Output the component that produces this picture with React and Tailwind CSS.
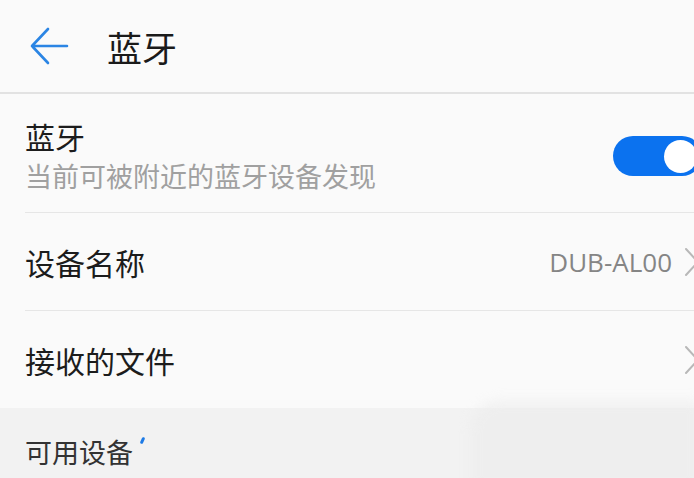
const font = { fontFamily: '"Noto Sans CJK SC", "Noto Sans", sans-serif' }

const Toggle = () => (
	<div className="w-[89px] h-[40px] mt-[6px] rounded-full bg-[#0b72ef] flex items-center justify-end pr-[5px] shrink-0">
		<div className="w-[33px] h-[33px] rounded-full bg-white" />
	</div>
)

const Chevron = () => (
	<svg width="16" height="30" viewBox="0 0 16 30" fill="none">
		<path d="M2 2l12 13L2 28" stroke="#b8b8b8" strokeWidth="2" strokeLinecap="round" strokeLinejoin="round" />
	</svg>
)

const Row = ({ label, children }) => (
	<div className="h-[98px] pl-[25px] flex items-center">
		<div className="flex-1 h-full flex items-center justify-between border-t border-[#e6e6e6] pr-[20px]">
			<span className="text-[30px] text-[#1c1c1c] leading-none">{label}</span>
			<div className="flex items-center gap-[12px]">
				{children}
				<Chevron />
			</div>
		</div>
	</div>
)

export default function App() {
	return (
		<div className="w-[694px] h-[478px] overflow-hidden bg-[#fafafa] relative" style={font}>
			<div className="w-[720px]">

				{/* HEADER */}
				<div className="h-[94px] flex items-center pl-[29px] gap-[38px] border-b-2 border-[#e2e2e2]">
					<svg width="40" height="40" viewBox="0 0 40 40" fill="none">
						<path d="M38 20H3M19 3L3 20l16 17" stroke="#2b85e4" strokeWidth="2.6" strokeLinecap="round" strokeLinejoin="round" />
					</svg>
					<span className="text-[35px] text-[#1a1a1a] leading-none">蓝牙</span>
				</div>

				{/* BLUETOOTH SWITCH */}
				<div className="h-[118px] pl-[25px] pr-[18px] flex items-center justify-between">
					<div className="flex flex-col gap-[11px] pt-[4px]">
						<span className="text-[30px] text-[#1c1c1c] leading-none">蓝牙</span>
						<span className="text-[27px] text-[#a0a0a0] leading-none">当前可被附近的蓝牙设备发现</span>
					</div>
					<Toggle />
				</div>

				<Row label="设备名称">
					<span className="text-[26px] text-[#858585] leading-none" style={{ fontFamily: '"Open Sans", "Noto Sans", sans-serif' }}>DUB-AL00</span>
				</Row>

				<Row label="接收的文件" />

				{/* AVAILABLE DEVICES */}
				<div className="h-[80px] bg-[#f2f2f2] pl-[25px] flex items-center pt-[6px]">
					<span className="text-[27px] text-[#333333] leading-none">可用设备</span>
					<span className="ml-[8px] -mt-[22px] w-[3px] h-[7px] rounded-full bg-[#1e7be6] rotate-[25deg]" />
				</div>
			</div>

			{/* blurred patch bottom right */}
			<div className="absolute left-[470px] top-[400px] w-[230px] h-[90px] bg-[#ececec] opacity-60 blur-[6px] rounded-tl-[30px]" />
		</div>
	)
}
